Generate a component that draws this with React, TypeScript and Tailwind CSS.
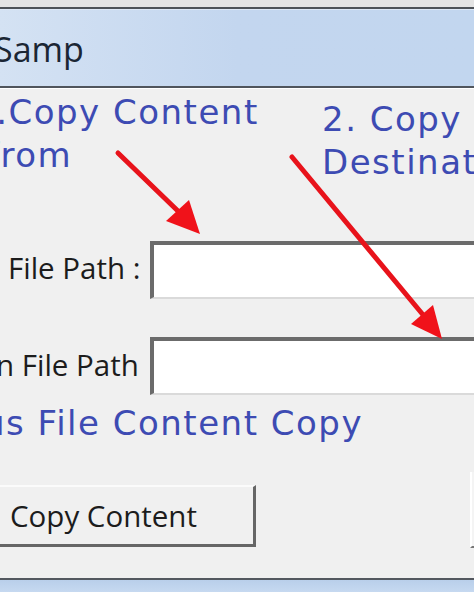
export default function App() {
  const blue = "text-[#3d4bb3] [font-family:'DejaVu_Sans',Verdana,sans-serif] text-[34px] leading-[43px] tracking-[1.5px] whitespace-nowrap";
  const label = "text-[#1c1c1c] [font-family:'Open_Sans','Liberation_Sans',sans-serif] text-[29.5px] leading-[36px] whitespace-nowrap";

  return (
    <div className="relative flex h-[592px] w-[474px] flex-col overflow-hidden bg-[#f0f0f0]">
      {/* window chrome */}
      <div className="h-[7px] bg-[#e4e4e4]" />
      <div className="h-[2px] bg-[#4d5258]" />
      <div className="flex h-[77px] items-center bg-gradient-to-r from-[#d4e2f3] via-[#c3d6ef] to-[#c2d6ef] border-t border-[#dde8f6]">
        <span className="ml-[-6px] mt-[2px] text-[34px] leading-none text-[#1b2634] [font-family:'Open_Sans','Liberation_Sans',sans-serif]">
          Samp
        </span>
      </div>
      <div className="h-[2px] bg-[#50555c]" />
      <div className="h-[1px] bg-white" />

      {/* form body */}
      <div className="flex flex-1 flex-col">
        <div className="flex h-[95px] items-start">
          <div className={`${blue} ml-[-27px] mt-[2px] w-[349px] shrink-0`}>
            <div>1.Copy Content</div>
            <div className="ml-[14px]">from</div>
          </div>
          <div className={`${blue} mt-[9px] shrink-0`}>
            <div>2. Copy</div>
            <div>Destination</div>
          </div>
        </div>

        <div className="mt-[57px] flex items-center">
          <div className="w-[150px] shrink-0 pl-[8px] pb-[4px]">
            <span className={label}>File Path :</span>
          </div>
          <div className="h-[58px] w-[340px] shrink-0 border-t-[4px] border-l-[4px] border-b-[2px] border-r-[2px] border-t-[#6b6b6b] border-l-[#6b6b6b] border-b-[#dadada] border-r-[#dadada] bg-white" />
        </div>

        <div className="mt-[38px] flex items-center">
          <div className="w-[150px] shrink-0 pb-[2px]">
            <span className={`${label} ml-[-4px]`}>n File Path</span>
          </div>
          <div className="h-[58px] w-[340px] shrink-0 border-t-[4px] border-l-[4px] border-b-[2px] border-r-[2px] border-t-[#6b6b6b] border-l-[#6b6b6b] border-b-[#dadada] border-r-[#dadada] bg-white" />
        </div>

        <div className={`${blue} mt-[7px] ml-[-17px]`}>us File Content Copy</div>

        <div className="mt-[40px] flex items-start">
          <button className="ml-[-10px] flex h-[62px] w-[266px] items-center border-t-[2px] border-l-[2px] border-b-[3px] border-r-[3px] border-t-[#fbfbfb] border-l-[#fbfbfb] border-b-[#666] border-r-[#666] bg-[#f0f0f0] pl-[18px] text-left">
            <span className="text-[29.5px] leading-none text-[#1c1c1c] [font-family:'Open_Sans','Liberation_Sans',sans-serif]">
              Copy Content
            </span>
          </button>
          <div className="ml-auto mt-[-13px] h-[76px] w-[4px] border-l-[2px] border-b-[2px] border-l-white border-b-[#777] bg-[#f4f4f4]" />
        </div>
      </div>

      <div className="h-[2px] bg-[#53585f]" />
      <div className="h-[12px] bg-gradient-to-b from-[#b9cfea] to-[#c6d9f0]" />

      {/* red annotation arrows */}
      <svg className="pointer-events-none absolute inset-0" width="474" height="592" viewBox="0 0 474 592">
        <line x1="118" y1="153" x2="180" y2="213" stroke="#e8131b" strokeWidth="5" strokeLinecap="round" />
        <polygon points="200,234 166,221 189,200" fill="#f0121a" />
        <line x1="292" y1="157" x2="424" y2="316" stroke="#e8131b" strokeWidth="5" strokeLinecap="round" />
        <polygon points="442,339 411,324 433,305" fill="#f0121a" />
      </svg>
    </div>
  );
}
